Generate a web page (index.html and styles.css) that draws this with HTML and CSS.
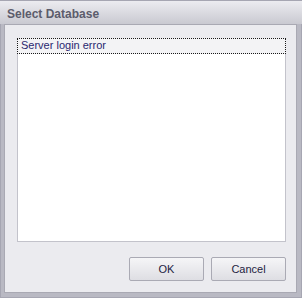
FILE: index.html
```html
<!DOCTYPE html>
<html>
<head>
<meta charset="utf-8">
<link rel="stylesheet" href="styles.css">
</head>
<body>
<div class="window">
  <div class="titlebar">Select Database</div>
  <div class="panel">
    <div class="list">
      <div class="item">Server login error</div>
    </div>
    <div class="buttons">
      <button class="btn">OK</button>
      <button class="btn">Cancel</button>
    </div>
  </div>
</div>
</body>
</html>
```
FILE: styles.css
```css
html, body {
  margin: 0;
  padding: 0;
  background: #b9b9c3;
}
.window {
  width: 302px;
  height: 298px;
  box-sizing: border-box;
  display: flex;
  flex-direction: column;
  background: #b9b9c3;
  border: 1px solid #a6a6b2;
  font-family: "Liberation Sans", Arial, sans-serif;
}
.titlebar {
  height: 24px;
  box-sizing: border-box;
  padding: 6px 0 0 6px;
  font-size: 12px;
  font-weight: bold;
  color: #5c5c6c;
  background: linear-gradient(#ececf0, #c9c9d1);
  margin: -1px -1px 0 -1px;
  border-top: 1px solid #a6a6b2;
  padding-left: 7px;
}
.panel {
  flex: 1;
  margin: 0 4px 4px 3px;
  border: 1px solid #a9a9b3;
  background: #ebebef;
  padding: 13px 10px 10px 12px;
  display: flex;
  flex-direction: column;
}
.list {
  height: 204px;
  box-sizing: border-box;
  background: #ffffff;
  border: 1px solid #c3c3cb;
}
.item {
  height: 16px;
  box-sizing: border-box;
  margin: -1px -1px 0 -1px;
  border: 1px dotted #1a1a1a;
  background: #f3f3f5;
  color: #2a2870;
  font-size: 11px;
  line-height: 13px;
  padding-left: 3px;
}
.buttons {
  margin-top: 15px;
  display: flex;
  justify-content: flex-end;
  gap: 7px;
}
.btn {
  width: 75px;
  height: 24px;
  margin: 0;
  padding: 0;
  border: 1px solid #aaaab4;
  border-radius: 2px;
  background: linear-gradient(#f5f5f7, #dedee3);
  font-family: "Liberation Sans", Arial, sans-serif;
  font-size: 11px;
  color: #23233f;
}
```
